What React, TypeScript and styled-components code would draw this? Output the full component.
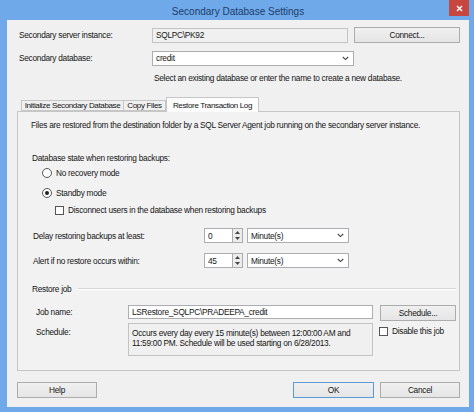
import React from "react";
import styled, { createGlobalStyle } from "styled-components";

const GlobalStyle = createGlobalStyle`
  html, body {
    margin: 0;
    padding: 0;
  }
  body {
    font-family: "Liberation Sans", Arial, sans-serif;
    font-size: 8.3px;
    letter-spacing: -0.27px;
    color: #151515;
    background: #6fa9ea;
  }
  * {
    box-sizing: border-box;
  }
`;

const Window = styled.div`
  width: 474px;
  height: 412px;
  padding: 0 5px 5px 7px;
  display: flex;
  flex-direction: column;
  background: #6fa9ea;
`;

const TitleBar = styled.div`
  height: 20px;
  display: grid;
  grid-template-columns: 20px 1fr 20px;
  align-items: start;
`;

const Title = styled.div`
  grid-column: 2;
  text-align: center;
  font-size: 10px;
  letter-spacing: 0;
  line-height: 16px;
  padding-top: 4px;
  color: #1c3d68;
`;

const CloseButton = styled.div`
  grid-column: 3;
  width: 20px;
  height: 16px;
  background: #c7463f;
  display: flex;
  align-items: center;
  justify-content: center;
`;

const Client = styled.div`
  flex: 1;
  background: #f0f0f0;
  padding: 7px 9px 9px 10px;
  display: flex;
  flex-direction: column;
`;

const FormRow = styled.div<{ $top: number; $indent?: number; $align?: string; $h?: number }>`
  display: flex;
  align-items: ${(p) => p.$align || "center"};
  height: ${(p) => p.$h || 16}px;
  margin-top: ${(p) => p.$top}px;
  padding-left: ${(p) => p.$indent ?? 2}px;
  white-space: nowrap;
`;

const FieldLabel = styled.span<{ $w: number; $pt?: number }>`
  width: ${(p) => p.$w}px;
  flex-shrink: 0;
  line-height: 10px;
  padding-top: ${(p) => p.$pt || 0}px;
`;

const TextBox = styled.div<{ $w: number; $h?: number; $ro?: boolean }>`
  width: ${(p) => p.$w}px;
  height: ${(p) => p.$h || 15}px;
  border: 1px solid ${(p) => (p.$ro ? "#c3c3c3" : "#abadb3")};
  background: ${(p) => (p.$ro ? "#f0f0f0" : "#ffffff")};
  padding: 0 3px;
  display: flex;
  align-items: center;
  white-space: nowrap;
  overflow: hidden;
  flex-shrink: 0;
`;

const Combo = styled(TextBox)<{ $gap?: number }>`
  justify-content: space-between;
  padding-right: 4px;
  margin-left: ${(p) => p.$gap || 0}px;
`;

const Button = styled.button<{ $w: number; $gap?: number; $default?: boolean }>`
  width: ${(p) => p.$w}px;
  height: 16px;
  margin-left: ${(p) => p.$gap || 0}px;
  padding: 0;
  border: 1px solid ${(p) => (p.$default ? "#5b9bd5" : "#acacac")};
  background: linear-gradient(#f0f0f0, #e5e5e5);
  font: inherit;
  letter-spacing: inherit;
  color: inherit;
  flex-shrink: 0;
`;

const Hint = styled.div`
  margin-top: 7px;
  margin-left: 137px;
  line-height: 10px;
  white-space: nowrap;
`;

const TabStrip = styled.div`
  display: flex;
  align-items: flex-end;
  height: 14px;
  margin-top: 14px;
  margin-left: 4px;
  position: relative;
  z-index: 1;
`;

const Tab = styled.div<{ $w: number; $active?: boolean }>`
  width: ${(p) => p.$w}px;
  height: ${(p) => (p.$active ? 15 : 11)}px;
  margin-bottom: ${(p) => (p.$active ? -1 : 0)}px;
  border: 1px solid #c6c6c6;
  border-bottom: ${(p) => (p.$active ? "none" : "1px solid #c6c6c6")};
  border-left: ${(p) => (p.$active ? "1px solid #c6c6c6" : "none")};
  background: ${(p) => (p.$active ? "#fcfcfc" : "#f0f0f0")};
  display: flex;
  align-items: ${(p) => (p.$active ? "flex-start" : "center")};
  padding-top: ${(p) => (p.$active ? 3 : 0)}px;
  justify-content: center;
  white-space: nowrap;
  font-size: 8px;
  letter-spacing: -0.35px;
  line-height: 9px;
  &:first-child {
    border-left: 1px solid #c6c6c6;
  }
`;

const TabPanel = styled.div`
  height: 260px;
  border: 1px solid #c6c6c6;
  background: #f2f2f2;
  padding: 0 3px 0 14px;
  display: flex;
  flex-direction: column;
`;

const PanelText = styled.div<{ $top: number; $left?: number }>`
  margin-top: ${(p) => p.$top}px;
  margin-left: ${(p) => p.$left || 0}px;
  line-height: 10px;
  white-space: nowrap;
`;

const OptionRow = styled.div<{ $top: number; $left: number }>`
  display: flex;
  align-items: center;
  gap: 4px;
  height: 12px;
  margin-top: ${(p) => p.$top}px;
  margin-left: ${(p) => p.$left}px;
  white-space: nowrap;
`;

const Radio = styled.span<{ $checked?: boolean }>`
  width: 10px;
  height: 10px;
  border-radius: 50%;
  border: 1px solid #555;
  background: #fff;
  display: flex;
  align-items: center;
  justify-content: center;
  &::after {
    content: "";
    width: 4px;
    height: 4px;
    border-radius: 50%;
    background: ${(p) => (p.$checked ? "#222" : "transparent")};
  }
`;

const CheckBox = styled.span<{ $gap?: number }>`
  width: 9px;
  height: 9px;
  border: 1px solid #555;
  background: #fff;
  flex-shrink: 0;
  margin-left: ${(p) => p.$gap || 0}px;
`;

const SpinBox = styled.div`
  display: flex;
  height: 15px;
`;

const SpinInput = styled(TextBox)`
  border-right: none;
`;

const SpinButtons = styled.div`
  width: 11px;
  height: 15px;
  border: 1px solid #acacac;
  background: #ececec;
  display: flex;
  flex-direction: column;
  align-items: center;
  justify-content: space-around;
`;

const GroupHeader = styled.div`
  display: flex;
  align-items: center;
  height: 10px;
  margin-top: 16px;
  white-space: nowrap;
  &::after {
    content: "";
    flex: 1;
    height: 1px;
    margin-left: 7px;
    background: #d5d5d5;
    border-bottom: 1px solid #ffffff;
  }
`;

const ScheduleBox = styled.div`
  width: 245px;
  height: 33px;
  border: 1px solid #c3c3c3;
  background: #f0f0f0;
  padding: 4px 3px 0;
  line-height: 10px;
  white-space: nowrap;
  flex-shrink: 0;
`;

const DisableOption = styled.div`
  display: flex;
  align-items: center;
  gap: 4px;
  margin-top: 3px;
  line-height: 10px;
`;

const Footer = styled.div`
  display: flex;
  justify-content: space-between;
  margin-top: 11px;
`;

const ButtonGroup = styled.div`
  display: flex;
`;

const Chevron = () => (
  <svg width="7" height="5" viewBox="0 0 7 5">
    <path d="M0.8 1 L3.5 3.6 L6.2 1" fill="none" stroke="#444" strokeWidth="1.1" />
  </svg>
);

const Spin = ({ value }: { value: string }) => (
  <SpinBox>
    <SpinInput $w={28}>{value}</SpinInput>
    <SpinButtons>
      <svg width="5" height="3" viewBox="0 0 5 3">
        <path d="M0 3 L2.5 0 L5 3 Z" fill="#444" />
      </svg>
      <svg width="5" height="3" viewBox="0 0 5 3">
        <path d="M0 0 L2.5 3 L5 0 Z" fill="#444" />
      </svg>
    </SpinButtons>
  </SpinBox>
);

const App = () => {
  return (
    <Window>
      <GlobalStyle />
      <TitleBar>
        <Title>Secondary Database Settings</Title>
        <CloseButton>
          <svg width="7" height="7" viewBox="0 0 7 7">
            <path d="M1 1 L6 6 M6 1 L1 6" stroke="#fff" strokeWidth="1.4" />
          </svg>
        </CloseButton>
      </TitleBar>
      <Client>
        <FormRow $top={0}>
          <FieldLabel $w={133}>Secondary server instance:</FieldLabel>
          <TextBox $w={196} $ro>
            SQLPC\PK92
          </TextBox>
          <Button $w={106} $gap={6}>
            Connect...
          </Button>
        </FormRow>
        <FormRow $top={7}>
          <FieldLabel $w={133}>Secondary database:</FieldLabel>
          <Combo $w={202}>
            credit
            <Chevron />
          </Combo>
        </FormRow>
        <Hint>Select an existing database or enter the name to create a new database.</Hint>

        <TabStrip>
          <Tab $w={103}>Initialize Secondary Database</Tab>
          <Tab $w={42}>Copy Files</Tab>
          <Tab $w={93} $active>
            Restore Transaction Log
          </Tab>
        </TabStrip>
        <TabPanel>
          <PanelText $top={8} $left={-1}>
            Files are restored from the destination folder by a SQL Server Agent job running on the secondary server
            instance.
          </PanelText>
          <PanelText $top={23}>Database state when restoring backups:</PanelText>
          <OptionRow $top={4} $left={10}>
            <Radio />
            No recovery mode
          </OptionRow>
          <OptionRow $top={8} $left={10}>
            <Radio $checked />
            Standby mode
          </OptionRow>
          <OptionRow $top={5} $left={23}>
            <CheckBox />
            Disconnect users in the database when restoring backups
          </OptionRow>

          <FormRow $top={12} $indent={1} $h={15}>
            <FieldLabel $w={171}>Delay restoring backups at least:</FieldLabel>
            <Spin value="0" />
            <Combo $w={102} $gap={4}>
              Minute(s)
              <Chevron />
            </Combo>
          </FormRow>
          <FormRow $top={10} $indent={1} $h={15}>
            <FieldLabel $w={171}>Alert if no restore occurs within:</FieldLabel>
            <Spin value="45" />
            <Combo $w={102} $gap={4}>
              Minute(s)
              <Chevron />
            </Combo>
          </FormRow>

          <GroupHeader>Restore job</GroupHeader>
          <FormRow $top={11} $indent={4} $align="flex-start">
            <FieldLabel $w={92} $pt={2}>
              Job name:
            </FieldLabel>
            <TextBox $w={245} $h={14}>
              LSRestore_SQLPC\PRADEEPA_credit
            </TextBox>
            <Button $w={76} $gap={7}>
              Schedule...
            </Button>
          </FormRow>
          <FormRow $top={2} $indent={4} $align="flex-start" $h={33}>
            <FieldLabel $w={92} $pt={4}>
              Schedule:
            </FieldLabel>
            <ScheduleBox>
              Occurs every day every 15 minute(s) between 12:00:00 AM and
              <br />
              11:59:00 PM. Schedule will be used starting on 6/28/2013.
            </ScheduleBox>
            <DisableOption>
              <CheckBox $gap={6} />
              Disable this job
            </DisableOption>
          </FormRow>
        </TabPanel>

        <Footer>
          <Button $w={80}>Help</Button>
          <ButtonGroup>
            <Button $w={81} $default>
              OK
            </Button>
            <Button $w={80} $gap={6}>
              Cancel
            </Button>
          </ButtonGroup>
        </Footer>
      </Client>
    </Window>
  );
};

export default App;
